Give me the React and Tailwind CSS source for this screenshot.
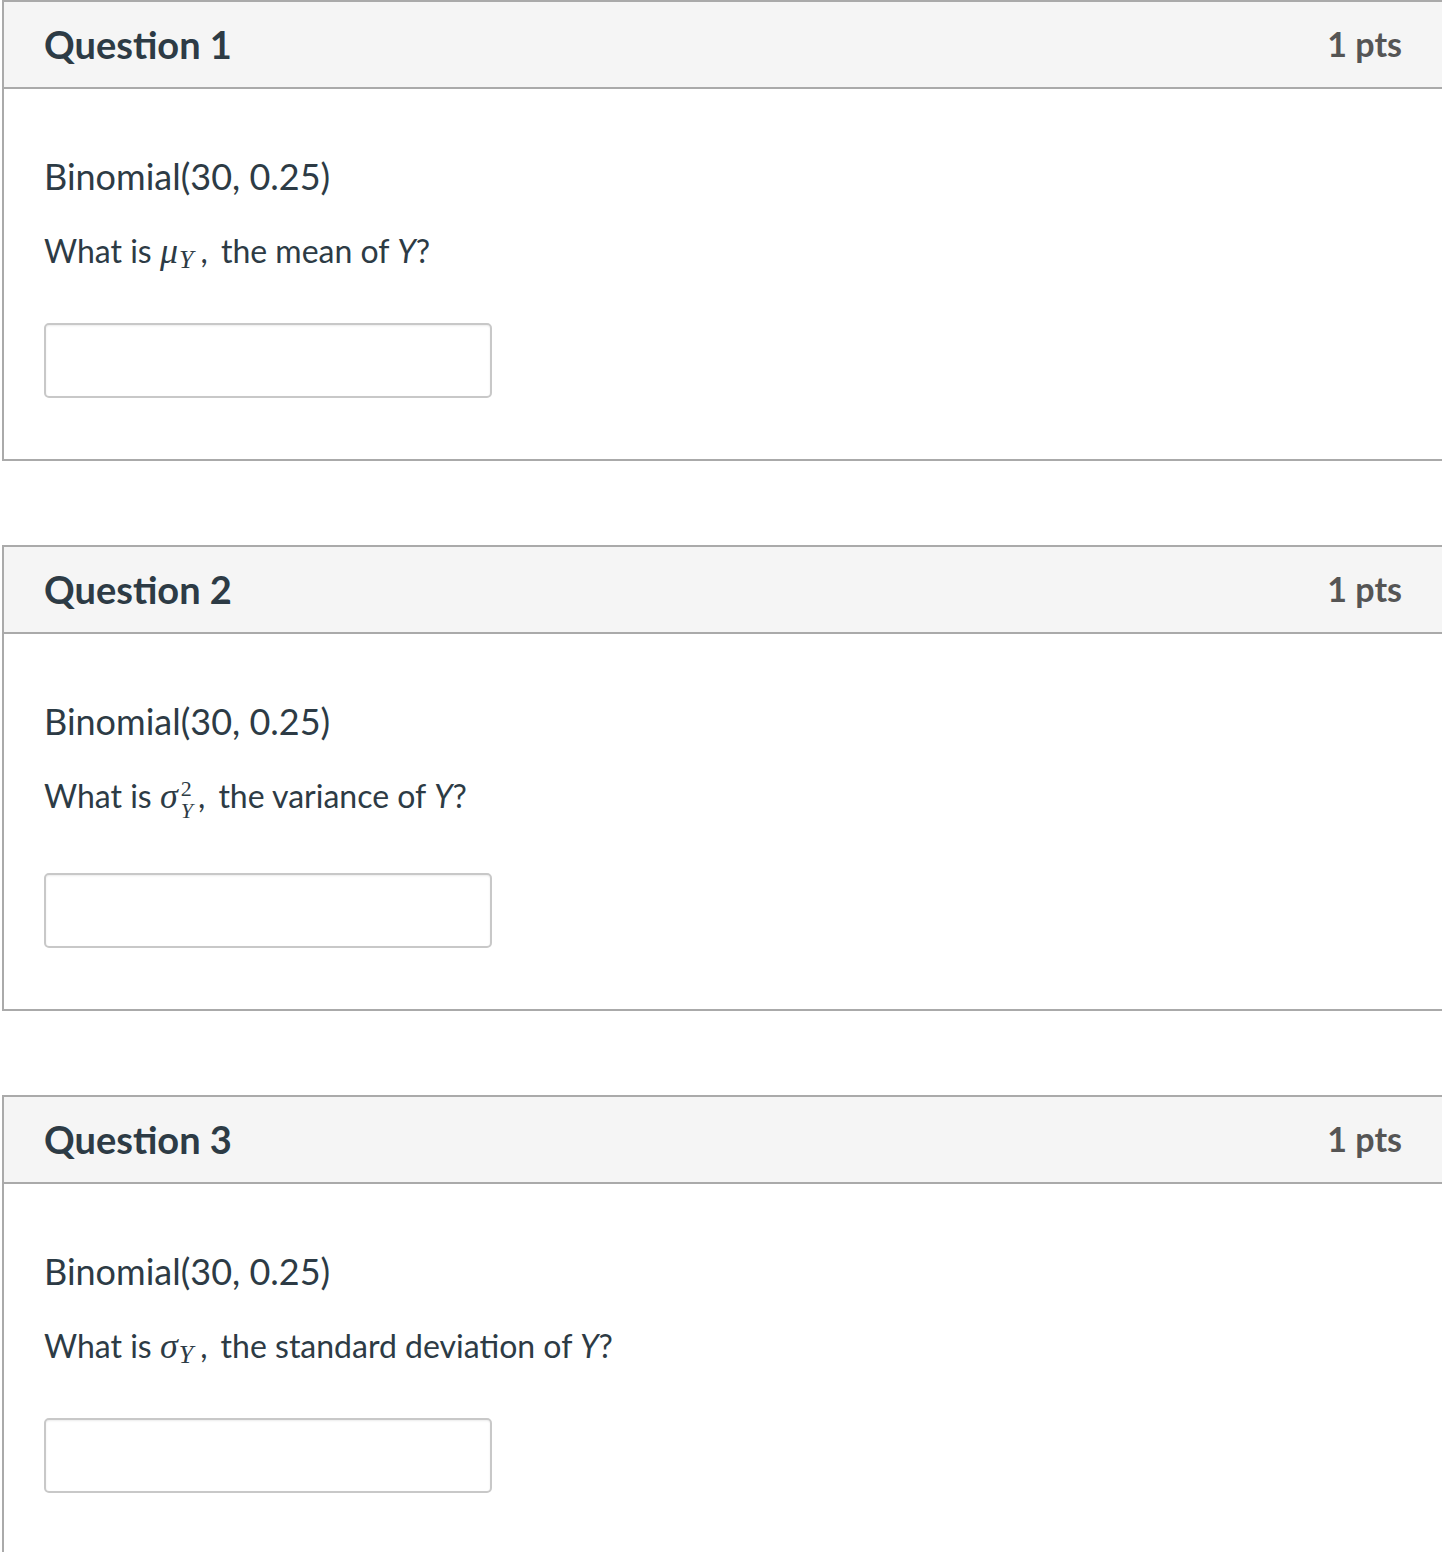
import React from 'react'

const QUESTIONS = [
  { n: 1, math: 'mu', rest: ' the mean of ' },
  { n: 2, math: 'var', rest: ' the variance of ' },
  { n: 3, math: 'sigma', rest: ' the standard deviation of ' },
]

function MathSym({ kind }) {
  const serif = "font-['Liberation_Serif',serif] italic"
  if (kind === 'var') {
    return (
      <span className={`${serif} text-[36px]`}>
        σ
        <span className="inline-flex flex-col align-[12px] text-[22px] leading-[22px] ml-[3px] mr-[5px]">
          <span className="not-italic">2</span>
          <span>Y</span>
        </span>
      </span>
    )
  }
  return (
    <span className={`${serif} text-[36px]`}>
      {kind === 'mu' ? 'μ' : 'σ'}
      <span className="relative top-[5px] text-[26px] ml-[1px] mr-[7px]">Y</span>
    </span>
  )
}

function Question({ q }) {
  return (
    <div className="ml-[2px] border-l-2 border-t-2 border-b-2 border-[#aaaaaa] bg-white mb-[84px]">
      <div className="h-[87px] bg-[#f5f5f5] border-b-2 border-[#aaaaaa] flex items-center justify-between pl-[40px] pr-[40px]">
        <h2 className="text-[38px] leading-[1.2] font-bold text-[#2d3b45]">Question {q.n}</h2>
        <div className="text-[34px] leading-[1.2] font-bold text-[#555555]">1 pts</div>
      </div>
      <div className="pt-[60px] pb-[61px] pl-[40px] text-[#2d3b45]">
        <p className="text-[36px] leading-[54px]">Binomial(30, 0.25)</p>
        <p className={`mt-[24px] text-[32px] leading-[48px] ${q.math === 'var' ? 'pb-[7px]' : ''}`}>
          What is <MathSym kind={q.math} /><span className="mr-[5px]">,</span>{q.rest}<span className="italic">Y</span>?
        </p>
        <input
          type="text"
          className="mt-[44px] block w-[448px] h-[75px] rounded-[5px] border-2 border-[#c8c8c8] bg-white shadow-[inset_0_1px_2px_rgba(0,0,0,0.08)] outline-none"
        />
      </div>
    </div>
  )
}

export default function App() {
  return (
    <div className="min-h-screen bg-white font-['Lato',sans-serif] overflow-hidden">
      {QUESTIONS.map(q => (
        <Question key={q.n} q={q} />
      ))}
    </div>
  )
}
